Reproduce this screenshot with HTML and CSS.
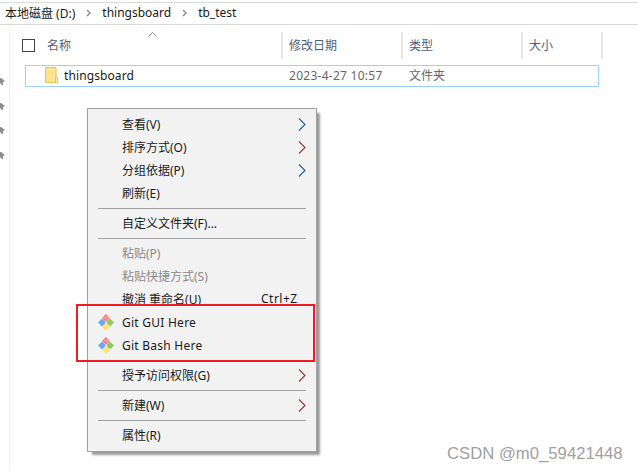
FILE: index.html
```html
<!DOCTYPE html>
<html lang="en">
<head>
    <meta charset="UTF-8">
    <title>tb_test</title>
    <link rel="stylesheet" href="styles.css">
</head>
<body>
    <div class="window">
        <div class="address">
            <span>本地磁盘 (D:)</span>
            <svg class="crumb" width="5" height="8" viewBox="0 0 5 8"><path d="M1 1l3 3-3 3" fill="none" stroke="#8a8a8a" stroke-width="1.4"/></svg>
            <span>thingsboard</span>
            <svg class="crumb" width="5" height="8" viewBox="0 0 5 8"><path d="M1 1l3 3-3 3" fill="none" stroke="#8a8a8a" stroke-width="1.4"/></svg>
            <span>tb_test</span>
        </div>

        <div class="content">
            <div class="nav-pane">
                <svg class="pin" width="5" height="8" viewBox="0 0 5 8"><path d="M0 0h1l4 3-2 1v3H2L0 5z" fill="#8c8c8c"/></svg>
                <svg class="pin" width="5" height="8" viewBox="0 0 5 8"><path d="M0 0h1l4 3-2 1v3H2L0 5z" fill="#8c8c8c"/></svg>
                <svg class="pin" width="5" height="8" viewBox="0 0 5 8"><path d="M0 0h1l4 3-2 1v3H2L0 5z" fill="#8c8c8c"/></svg>
                <svg class="pin" width="5" height="8" viewBox="0 0 5 8"><path d="M0 0h1l4 3-2 1v3H2L0 5z" fill="#8c8c8c"/></svg>
            </div>

            <div class="files">
                <div class="columns">
                    <div class="col col-name">
                        <span class="checkbox"></span>
                        <span>名称</span>
                        <svg class="sort" width="9" height="5" viewBox="0 0 9 5"><path d="M.5 4.500l4-4 4 4" fill="none" stroke="#8a8a8a"/></svg>
                    </div>
                    <div class="col col-date">修改日期</div>
                    <div class="col col-type">类型</div>
                    <div class="col col-size">大小</div>
                </div>

                <div class="row">
                    <svg class="folder" width="13" height="16" viewBox="0 0 13 16">
                        <path d="M.5.5h10.500v15H.5z" fill="#ffe38f" stroke="#e8c24e"/>
                        <path d="M10.500 10.500h2v5h-2z" fill="#fff4c8" stroke="#e8c24e"/>
                    </svg>
                    <span class="row-name">thingsboard</span>
                    <span class="row-date">2023-4-27 10:57</span>
                    <span class="row-type">文件夹</span>
                </div>
            </div>
        </div>
    </div>

    <div class="menu">
        <div class="item">查看(V)<svg class="arrow" width="8" height="13" viewBox="0 0 8 13"><path d="M1 .5l6 6-6 6" fill="none" stroke="#1f659e" stroke-width="1.200"/></svg></div>
        <div class="item">排序方式(O)<svg class="arrow" width="8" height="13" viewBox="0 0 8 13"><path d="M1 .5l6 6-6 6" fill="none" stroke="#8f3f3c" stroke-width="1.200"/></svg></div>
        <div class="item">分组依据(P)<svg class="arrow" width="8" height="13" viewBox="0 0 8 13"><path d="M1 .5l6 6-6 6" fill="none" stroke="#1f659e" stroke-width="1.200"/></svg></div>
        <div class="item">刷新(E)</div>
        <div class="sep"></div>
        <div class="item">自定义文件夹(F)...</div>
        <div class="sep"></div>
        <div class="item disabled">粘贴(P)</div>
        <div class="item disabled">粘贴快捷方式(S)</div>
        <div class="item">撤消 重命名(U)<span class="shortcut">Ctrl+Z</span></div>
        <div class="item latin">
            <svg class="git" width="16" height="17" viewBox="0 0 16 17">
                <path d="M8 0l4 4-4 4-4-4z" fill="#f27f7f"/>
                <path d="M6.500 3l2.500 2.500M8.500 2l2 2" stroke="#f9c4c4" fill="none"/>
                <path d="M12 4.500l4 4-4 4-4-4z" fill="#8ccb5e"/>
                <path d="M8 9l4 4-4 4-4-4z" fill="#ffe27a"/>
                <path d="M4 4.500l4 4-4 4-4-4z" fill="#6aa8f0"/>
                <path d="M8 7.500l1 1-1 1-1-1z" fill="#f2f2f2"/>
            </svg>
            <span>Git GUI Here</span>
        </div>
        <div class="item latin">
            <svg class="git" width="16" height="17" viewBox="0 0 16 17">
                <path d="M8 0l4 4-4 4-4-4z" fill="#f27f7f"/>
                <path d="M6.500 3l2.500 2.500M8.500 2l2 2" stroke="#f9c4c4" fill="none"/>
                <path d="M12 4.500l4 4-4 4-4-4z" fill="#8ccb5e"/>
                <path d="M8 9l4 4-4 4-4-4z" fill="#ffe27a"/>
                <path d="M4 4.500l4 4-4 4-4-4z" fill="#6aa8f0"/>
                <path d="M8 7.500l1 1-1 1-1-1z" fill="#f2f2f2"/>
            </svg>
            <span>Git Bash Here</span>
        </div>
        <div class="sep"></div>
        <div class="item">授予访问权限(G)<svg class="arrow" width="8" height="13" viewBox="0 0 8 13"><path d="M1 .5l6 6-6 6" fill="none" stroke="#8f3f3c" stroke-width="1.200"/></svg></div>
        <div class="sep"></div>
        <div class="item">新建(W)<svg class="arrow" width="8" height="13" viewBox="0 0 8 13"><path d="M1 .5l6 6-6 6" fill="none" stroke="#8f3f3c" stroke-width="1.200"/></svg></div>
        <div class="sep"></div>
        <div class="item">属性(R)</div>
    </div>

    <div class="highlight"></div>
    <div class="watermark">CSDN @m0_59421448</div>
</body>
</html>
```

FILE: styles.css
```css
body {
    margin: 0;
    background: white;
    font-family: "Noto Sans", "Noto Sans CJK SC", sans-serif;
    font-size: 12px;
    color: #1a1a1a;
    overflow: hidden;
}

.window {
    height: 471px;
    display: flex;
    flex-direction: column;
    padding-top: 2px;
    box-sizing: border-box;
}

.address {
    height: 19px;
    padding: 0 0 2px 5px;
    border-top: 1px solid #d9d9d9;
    border-bottom: 1px solid #d9d9d9;
    display: flex;
    align-items: center;
    gap: 11px;
}

.content {
    flex: 1;
    display: flex;
}

.nav-pane {
    width: 9px;
    border-right: 1px solid #f0f0f0;
    padding-top: 53px;
    display: flex;
    flex-direction: column;
    gap: 16.500px;
}

.pin {
    display: block;
}

.files {
    flex: 1;
    padding: 7px 0 0 0;
}

.columns {
    display: flex;
    height: 27px;
    color: #4c607a;
}

.col {
    display: flex;
    align-items: center;
    box-sizing: border-box;
    border-right: 2px solid #e5e5e5;
    padding: 0 0 2px 6px;
}

.col-name {
    width: 273px;
    padding-left: 12px;
    position: relative;
}

.col-date {
    width: 120px;
}

.col-type {
    width: 120px;
}

.col-size {
    width: 80px;
}

.checkbox {
    width: 11px;
    height: 11px;
    border: 1px solid #444;
    margin: 2px 12px 0 0;
}

.sort {
    position: absolute;
    left: 138px;
    top: 0;
}

.row {
    display: flex;
    align-items: center;
    height: 18px;
    padding-bottom: 2px;
    width: 572px;
    margin: 6px 0 0 15px;
    border: 1px solid #99d1ff;
}

.folder {
    margin-left: 19px;
    flex: none;
}

.row-name {
    width: 225px;
    margin-left: 6px;
    letter-spacing: .1px;
}

.row-date {
    width: 120px;
    color: #666;
    letter-spacing: .27px;
}

.row-type {
    color: #666;
}

.menu {
    position: absolute;
    left: 87px;
    top: 108px;
    width: 228px;
    padding: 4px 0;
    background: #f2f2f2;
    border: 1px solid #a0a0a0;
    box-shadow: 4px 4px 2px -1px #9c9c9c;
}

.item {
    height: 23px;
    box-sizing: border-box;
    padding: 0 0 2px 34px;
    display: flex;
    align-items: center;
    position: relative;
}

.item.latin {
    padding-bottom: 0;
    letter-spacing: .25px;
}

.item.disabled {
    color: #8a8a8a;
}

.sep {
    height: 1px;
    margin: 3px 10px;
    background: #a0a0a0;
}

.arrow {
    position: absolute;
    left: 210px;
    top: 5px;
}

.shortcut {
    position: absolute;
    left: 173px;
    letter-spacing: .5px;
}

.git {
    position: absolute;
    left: 10px;
    top: 3px;
}

.highlight {
    position: absolute;
    left: 76px;
    top: 304px;
    width: 235px;
    height: 54px;
    border: 2px solid #ed1c24;
}

.watermark {
    position: absolute;
    left: 447px;
    top: 444px;
    font-family: "Liberation Sans", sans-serif;
    font-size: 16.700px;
    color: #a0a0a0;
}
```
